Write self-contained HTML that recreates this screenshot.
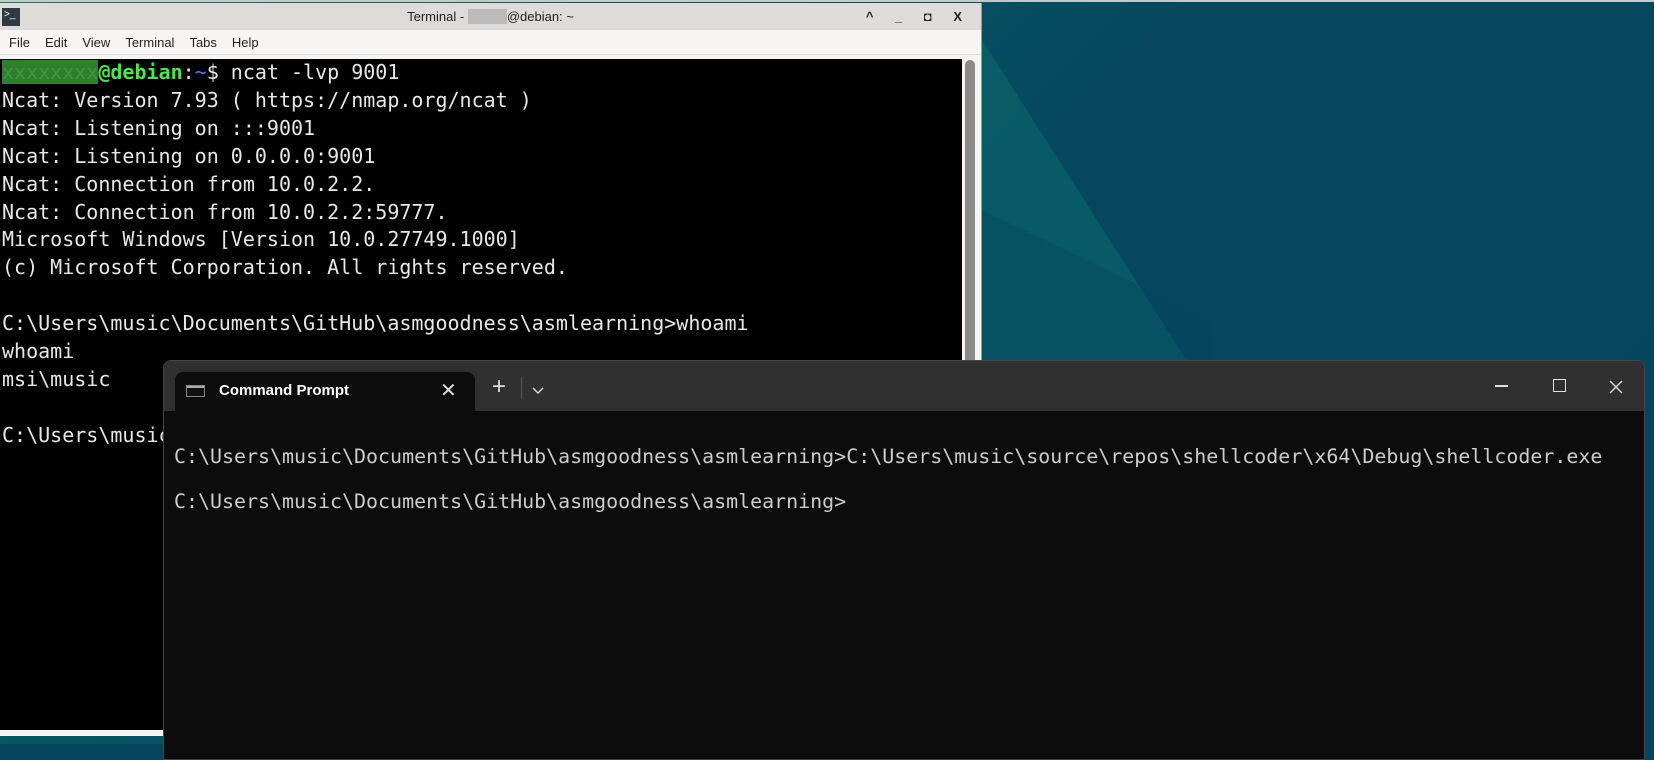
<!DOCTYPE html>
<html><head><meta charset="utf-8"><style>
*{margin:0;padding:0;box-sizing:border-box}
body{width:1654px;height:744px;overflow:hidden;position:relative;background:#05465c;font-family:"Liberation Sans",sans-serif}
.bg{position:absolute;inset:0;background:linear-gradient(135deg,#0b7a72 0%,#075c66 25%,#06475e 50%,#06465d 100%)}
.term{position:absolute;left:0;top:3px;width:982px;height:733px;background:#f6f5f4;border-right:1px solid #999}
.title{height:27px;background:#dedcd8;position:relative;font-size:13px;color:#222;text-align:center;line-height:27px}
.menu{height:25px;background:#f6f5f4;font-size:13px;color:#222;line-height:25px;padding-left:9px;border-bottom:1px solid #ddd}
.menu span{margin-right:15px}
.tcontent{position:absolute;left:0;top:56px;width:962px;height:671px;background:#000;font-family:"DejaVu Sans Mono","Liberation Mono",monospace;font-size:20px;color:#e8e8e8;line-height:27.9px;white-space:pre;padding-left:2px;padding-top:0}
.sb{position:absolute;left:965px;top:57px;width:10px;height:670px;background:#8a8a8a;border-radius:5px}
.cmd{position:absolute;left:163px;top:360px;width:1482px;height:400px;background:#0c0c0c;border:1px solid #444;border-radius:8px 8px 0 0;overflow:hidden}
.bar{height:50px;background:#303030;position:relative}
.tab{position:absolute;left:11px;top:11px;width:300px;height:40px;background:#0c0c0c;border-radius:8px 8px 0 0}
.cc{position:absolute;left:10px;top:73px;font-family:"DejaVu Sans Mono","Liberation Mono",monospace;font-size:19.95px;color:#cccccc;line-height:45px;white-space:pre}
</style></head><body>
<div class="bg"></div>
<svg style="position:absolute;left:982px;top:0" width="672" height="744"><polygon points="0,40 230,400 240,744 0,744" fill="#0d7f76" opacity=".35"/><polygon points="0,210 230,320 240,744 0,744" fill="#06465e" opacity=".4"/></svg>
<div style="position:absolute;left:0;top:0;width:1654px;height:2px;background:#c8c8c8"></div>
<div class="term">
 <div class="title">Terminal - <span style="background:#bbb;color:#bbb">xxxxxx</span>@debian: ~
  <div style="position:absolute;left:2px;top:5px;width:18px;height:18px;background:#2f3a45;color:#fff;font-size:10px;line-height:14px;text-align:left;padding-left:2px">&gt;_</div>
  <div style="position:absolute;right:10px;top:0;font-size:13px;font-weight:bold;letter-spacing:9px">^ _ ◘ X</div>
 </div>
 <div class="menu"><span>File</span><span>Edit</span><span>View</span><span>Terminal</span><span>Tabs</span><span>Help</span></div>
 <div class="tcontent"><span style="background:#2f7f2f;color:#3a9a3a">xxxxxxxx</span><b style="color:#4ee44e">@debian</b>:<span style="color:#6a6aff">~</span>$ ncat -lvp 9001
Ncat: Version 7.93 ( https://nmap.org/ncat )
Ncat: Listening on :::9001
Ncat: Listening on 0.0.0.0:9001
Ncat: Connection from 10.0.2.2.
Ncat: Connection from 10.0.2.2:59777.
Microsoft Windows [Version 10.0.27749.1000]
(c) Microsoft Corporation. All rights reserved.

C:\Users\music\Documents\GitHub\asmgoodness\asmlearning>whoami
whoami
msi\music

C:\Users\music</div>
 <div class="sb"></div>
</div>
<div class="cmd">
 <div class="bar">
  <div class="tab">
   <div style="position:absolute;left:11px;top:13px;width:19px;height:12px;border:1px solid #888;background:#111"><div style="height:2px;background:#aaa"></div></div>
   <div style="position:absolute;left:44px;top:10px;color:#fff;font-size:15px;font-weight:bold">Command Prompt</div>
   <div style="position:absolute;left:265px;top:6px;color:#ddd;font-size:20px">✕</div>
  </div>
  <div style="position:absolute;left:328px;top:12px;color:#ddd;font-size:24px">+</div>
  <div style="position:absolute;left:357px;top:16px;width:1px;height:22px;background:#555"></div>
  <svg style="position:absolute;left:368px;top:26px" width="12" height="8"><path d="M1 1L6 6L11 1" stroke="#ddd" stroke-width="1.4" fill="none"/></svg>
  <div style="position:absolute;left:1331px;top:24px;width:13px;height:1.5px;background:#ddd"></div>
  <div style="position:absolute;left:1389px;top:18px;width:13px;height:13px;border:1.3px solid #ddd"></div>
  <svg style="position:absolute;left:1445px;top:19px" width="14" height="14"><path d="M1 1L13 13M13 1L1 13" stroke="#ddd" stroke-width="1.4"/></svg>
 </div>
 <div class="cc">C:\Users\music\Documents\GitHub\asmgoodness\asmlearning>C:\Users\music\source\repos\shellcoder\x64\Debug\shellcoder.exe
C:\Users\music\Documents\GitHub\asmgoodness\asmlearning></div>
</div>
</body></html>
